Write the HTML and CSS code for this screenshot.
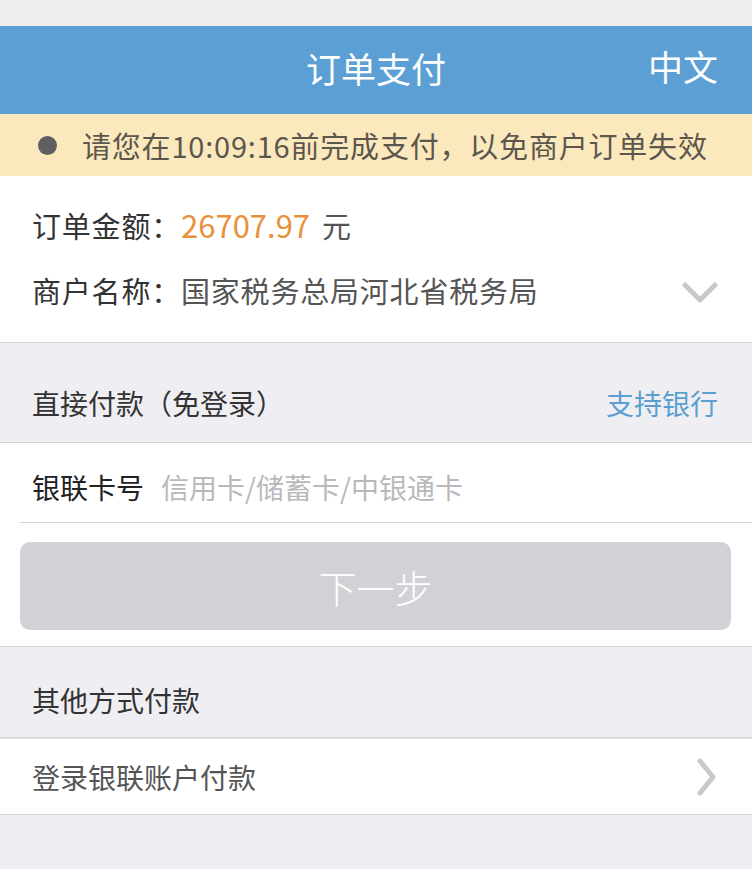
FILE: index.html
```html
<!DOCTYPE html>
<html lang="zh-CN">
<head>
  <meta charset="UTF-8">
  <meta name="viewport" content="width=device-width, initial-scale=1.0">
  <title>订单支付</title>
  <link rel="stylesheet" href="styles.css">
</head>
<body>
  <div class="status"></div>
  <div class="topbar">
    <p class="title">订单支付</p>
    <span class="lang">中文</span>
  </div>
  <div class="notice">
    <span class="dot"></span>
    <span>请您在10:09:16前完成支付，以免商户订单失效</span>
  </div>

  <div class="order">
    <div class="order-row">
      <span class="label">订单金额：</span><span class="amount">26707.97</span><span class="unit">元</span>
    </div>
    <div class="order-row">
      <span class="label">商户名称：</span><span class="value">国家税务总局河北省税务局</span>
      <svg class="arrow-down" width="36" height="24" viewBox="0 0 36 24">
        <polyline points="3,4 18,19 33,4" fill="none" stroke="#c9c9cd" stroke-width="5" stroke-linecap="round" stroke-linejoin="round"/>
      </svg>
    </div>
  </div>

  <div class="group-head first">
    <span>直接付款（免登录）</span>
    <a class="banks" href="#">支持银行</a>
  </div>
  <div class="card">
    <div class="card-row">
      <span class="card-label">银联卡号</span>
      <span class="card-hint">信用卡/储蓄卡/中银通卡</span>
    </div>
    <div class="btn-wrap">
      <button class="next" disabled>下一步</button>
    </div>
  </div>

  <div class="group-head second">
    <span>其他方式付款</span>
  </div>
  <div class="link-row">
    <span>登录银联账户付款</span>
    <svg class="arrow-right" width="20" height="38" viewBox="0 0 20 38">
      <polyline points="4,3 17,19 4,35" fill="none" stroke="#c9c9cd" stroke-width="5" stroke-linecap="round" stroke-linejoin="round"/>
    </svg>
  </div>
</body>
</html>
```

FILE: styles.css
```css
body {
    margin: 0;
    padding: 0;
    background-color: #efeff3;
    font-family: "Noto Sans CJK SC", "Noto Sans", sans-serif;
    font-size: 28px;
    color: #333;
}
p {
    margin: 0;
}
.status {
    height: 26px;
    background-color: #efeff1;
}
.topbar {
    height: 88px;
    background-color: #5b9fd5;
    color: #fff;
    display: flex;
    align-items: center;
    justify-content: center;
    position: relative;
}
.title {
    font-size: 35px;
    margin-top: -5px;
}
.lang {
    position: absolute;
    right: 34px;
    top: 0;
    line-height: 80px;
    font-size: 35px;
}
.notice {
    height: 62px;
    background-color: #fbe8bd;
    display: flex;
    align-items: center;
    padding-left: 38px;
    color: #5c574d;
    font-size: 29px;
    letter-spacing: 0.8px;
}
.dot {
    width: 19px;
    height: 19px;
    border-radius: 50%;
    background-color: #5f5f61;
    margin-right: 25px;
}
.order {
    background-color: #fff;
    padding: 16px 34px 20px 32px;
    border-bottom: 1px solid #d4d4d8;
    font-size: 29px;
    letter-spacing: 0.8px;
}
.order-row {
    height: 65px;
    display: flex;
    align-items: center;
    color: #555;
}
.order-row .label {
    color: #333;
}
.amount {
    color: #e8913a;
    margin-right: 12px;
    font-size: 31px;
    letter-spacing: 0;
}
.arrow-down {
    margin-left: auto;
    margin-top: 6px;
}
.group-head {
    display: flex;
    align-items: center;
    padding: 0 34px 0 32px;
    color: #333;
    border-bottom: 1px solid #d4d4d8;
    box-sizing: border-box;
}
.group-head.first {
    height: 100px;
    padding-top: 20px;
}
.group-head.second {
    height: 91px;
    padding-top: 16px;
}
.banks {
    margin-left: auto;
    color: #5b9fd0;
    text-decoration: none;
}
.card {
    background-color: #fff;
    border-bottom: 1px solid #d4d4d8;
}
.card-row {
    height: 80px;
    padding-top: 8px;
    box-sizing: border-box;
    margin-left: 20px;
    padding-left: 12px;
    display: flex;
    align-items: center;
    border-bottom: 1px solid #d4d4d8;
}
.card-label {
    color: #222;
    margin-right: 17px;
}
.card-hint {
    color: #b9b9bd;
}
.btn-wrap {
    padding: 19px 21px 16px 20px;
}
.next {
    display: block;
    width: 100%;
    height: 88px;
    border: none;
    border-radius: 10px;
    background-color: #d2d2d6;
    color: #fff;
    font-size: 38px;
    font-weight: 300;
    font-family: "Noto Sans CJK SC", sans-serif;
}
.link-row {
    height: 77px;
    background-color: #fff;
    display: flex;
    align-items: center;
    padding: 0 36px 0 32px;
    color: #555;
    border-top: 1px solid #e2e2e6;
    border-bottom: 1px solid #d4d4d8;
    box-sizing: border-box;
}
.arrow-right {
    margin-left: auto;
}
```
